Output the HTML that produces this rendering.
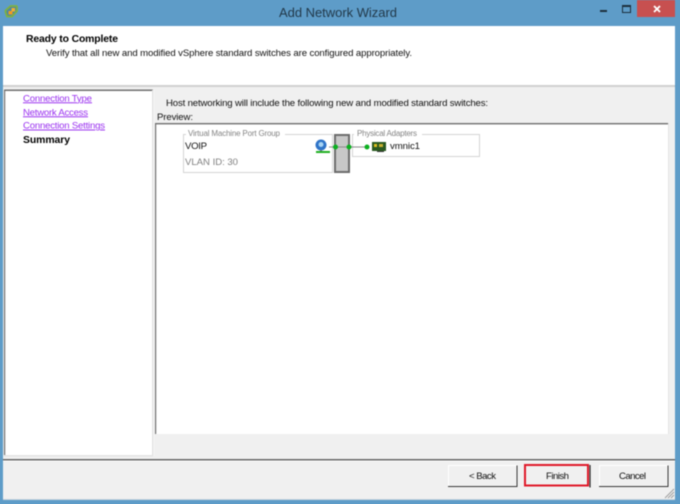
<!DOCTYPE html>
<html><head><meta charset="utf-8"><style>
html,body{margin:0;padding:0;width:680px;height:504px;overflow:hidden;background:#5e9cc8}
svg{display:block;filter:blur(.4px)}
text{font-family:"Liberation Sans",sans-serif;font-size:9.6px;fill:#111}
.b{font-weight:bold;font-size:10.4px;fill:#000}
.l{fill:#9a30f0;text-decoration:underline}
.g{fill:#808080}
.s{font-size:8px;fill:#858585}
</style></head><body>
<svg width="680" height="504" viewBox="0 0 680 504" xmlns="http://www.w3.org/2000/svg">
<rect width="680" height="504" fill="#5e9cc8"/>
<rect x="3" y="26" width="672" height="474" fill="#f0f0f0"/>
<rect x="3" y="499" width="672" height="1" fill="#c8d4dc"/>
<rect x="3" y="26" width="672" height="59" fill="#fff"/>
<rect x="3" y="85" width="672" height="2" fill="#d0d0d0"/>
<!-- title -->
<path d="M5.5 12V10.5L10.5 6H16.5L17 7V11L12 16.5H7Z" fill="#4d86a0" stroke="#7fb23e" stroke-width="1.8" stroke-linejoin="round"/>
<rect x="8.5" y="11" width="4" height="3.5" fill="#f09a20"/><rect x="11.5" y="8" width="3.5" height="3.5" fill="#f2b030"/>
<text x="279" y="17" textLength="118" style="font-size:13px;fill:#22394a">Add Network Wizard</text>
<rect x="600" y="10" width="7" height="2" fill="#1c2f3e"/>
<rect x="622.5" y="5.5" width="8" height="7" fill="none" stroke="#1c2f3e"/><rect x="622" y="5" width="9" height="2" fill="#1c2f3e"/>
<rect x="637" y="0" width="38" height="17" fill="#c75050"/>
<path d="M654 6l6 6M660 6l-6 6" stroke="#fff" stroke-width="1.8"/>
<!-- header -->
<text x="26" y="42" class="b" textLength="92">Ready to Complete</text>
<text x="46" y="56" textLength="366">Verify that all new and modified vSphere standard switches are configured appropriately.</text>
<!-- left panel -->
<rect x="4" y="90" width="150" height="366" fill="#fff"/>
<rect x="4" y="89.5" width="149" height="1.5" fill="#707070"/>
<rect x="4" y="90" width="1.2" height="366" fill="#707070"/>
<rect x="152" y="90" width="1.5" height="366" fill="#e4e4e4"/>
<rect x="4" y="455" width="149" height="1.5" fill="#e4e4e4"/>
<text x="23" y="101.3" class="l" textLength="69">Connection Type</text>
<text x="23" y="115.3" class="l" textLength="65">Network Access</text>
<text x="23" y="128.5" class="l" textLength="82">Connection Settings</text>
<text x="23" y="143" class="b" textLength="47">Summary</text>
<!-- right -->
<text x="166" y="106" textLength="322">Host networking will include the following new and modified standard switches:</text>
<text x="157" y="120" textLength="36">Preview:</text>
<rect x="155" y="123" width="514" height="311" fill="#fff"/>
<rect x="155" y="123" width="514" height="1.4" fill="#707070"/>
<rect x="155" y="123" width="1.2" height="311" fill="#707070"/>
<rect x="668" y="123" width="1" height="311" fill="#e4e4e4"/>
<!-- VM group -->
<rect x="183.5" y="134.5" width="149" height="38" fill="#fff" stroke="#d4d4d4"/>
<rect x="186" y="132" width="99" height="5" fill="#fff"/>
<text x="188" y="136" class="s" textLength="92">Virtual Machine Port Group</text>
<text x="185" y="149" textLength="22">VOIP</text>
<text x="185" y="165" class="g" textLength="53">VLAN ID: 30</text>
<circle cx="321" cy="145" r="5.5" fill="#2f74c8"/><circle cx="321" cy="144.5" r="2.5" fill="#a8d4f4"/>
<rect x="320" y="150" width="2" height="2" fill="#777"/>
<rect x="316" y="151" width="14" height="2" fill="#20b020"/>
<!-- phys -->
<rect x="352.5" y="134.5" width="127" height="22" fill="#fff" stroke="#d4d4d4"/>
<rect x="354" y="132" width="68" height="5" fill="#fff"/>
<text x="357" y="136" class="s" textLength="60">Physical Adapters</text>
<text x="390" y="149" textLength="30">vmnic1</text>
<rect x="372" y="142" width="14" height="9" fill="#2a5a20"/>
<rect x="374" y="144" width="3" height="3" fill="#e0c020"/><rect x="379" y="144" width="4" height="3" fill="#c8b030"/>
<rect x="377" y="151" width="7" height="1" fill="#333"/>
<!-- switch -->
<rect x="335" y="135" width="14" height="37" fill="#c8c8c8" stroke="#6c6c6c" stroke-width="2"/>
<path d="M329 147H367" stroke="#8a8a8a" stroke-width="1"/>
<circle cx="335.5" cy="147" r="2.5" fill="#0cb020"/><circle cx="349" cy="147" r="2.5" fill="#0cb020"/><circle cx="367" cy="147" r="2.5" fill="#0cb020"/>
<!-- footer -->
<rect x="3" y="459" width="672" height="1.5" fill="#686868"/>
<rect x="3" y="460.5" width="672" height="1" fill="#fff"/>
<g>
<rect x="448.5" y="465.5" width="68" height="20.5" fill="#f0f0f0" stroke="#fff"/>
<path d="M517 465.5V486.5H448" fill="none" stroke="#333" stroke-width="1"/>
<text x="469" y="479" textLength="27">&lt; Back</text>
<rect x="524" y="465" width="66" height="22" fill="#f0f0f0"/>
<path d="M590 465V487.5" stroke="#222" stroke-width="1.2"/>
<rect x="525" y="465" width="63" height="20.5" fill="#f0f0f0" stroke="#e01828" stroke-width="2"/>
<text x="546" y="479" textLength="23">Finish</text>
<rect x="599.5" y="465.5" width="68" height="20.5" fill="#f0f0f0" stroke="#fff"/>
<path d="M668 465.5V486.5H599" fill="none" stroke="#333" stroke-width="1"/>
<text x="619" y="479" textLength="27">Cancel</text>
</g>
<path d="M665 498l9-9M668 498l6-6M671 498l3-3" stroke="#a0a0a0" stroke-width="1"/>
</svg>
</body></html>
